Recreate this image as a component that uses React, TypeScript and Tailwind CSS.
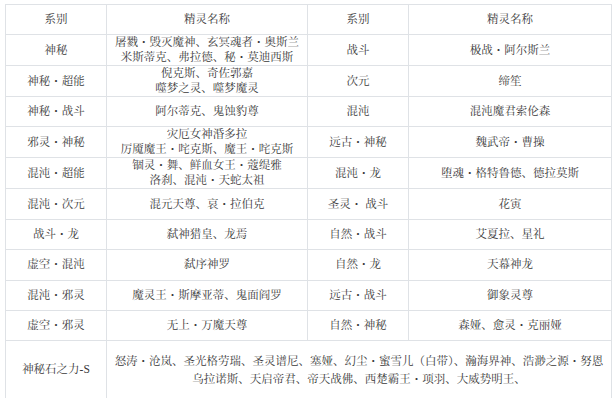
import React from "react";

type Row = { a: string; b: string[]; c: string; d: string[] };

const rows: Row[] = [
  {
    a: "神秘",
    b: ["屠戮・毁灭魔神、玄冥魂者・奥斯兰", "米斯蒂克、弗拉德、秘・莫迪西斯"],
    c: "战斗",
    d: ["极战・阿尔斯兰"],
  },
  {
    a: "神秘・超能",
    b: ["倪克斯、奇佐郭嘉", "噬梦之灵、噬梦魔灵"],
    c: "次元",
    d: ["缔笙"],
  },
  { a: "神秘・战斗", b: ["阿尔蒂克、鬼蚀豹尊"], c: "混沌", d: ["混沌魔君索伦森"] },
  {
    a: "邪灵・神秘",
    b: ["灾厄女神涽多拉", "厉魇魔王・咤克斯、魔王・咤克斯"],
    c: "远古・神秘",
    d: ["魏武帝・曹操"],
  },
  {
    a: "混沌・超能",
    b: ["锢灵・舞、鲜血女王・蔻缇雅", "洛刹、混沌・天蛇太祖"],
    c: "混沌・龙",
    d: ["堕魂・格特鲁德、德拉莫斯"],
  },
  { a: "混沌・次元", b: ["混元天尊、哀・拉伯克"], c: "圣灵・ 战斗", d: ["花寅"] },
  { a: "战斗・龙", b: ["弑神猎皇、龙焉"], c: "自然・战斗", d: ["艾夏拉、星礼"] },
  { a: "虚空・混沌", b: ["弑序神罗"], c: "自然・龙", d: ["天幕神龙"] },
  { a: "混沌・邪灵", b: ["魔灵王・斯摩亚蒂、鬼面阎罗"], c: "远古・战斗", d: ["御象灵尊"] },
  { a: "虚空・邪灵", b: ["无上・万魔天尊"], c: "自然・神秘", d: ["森娅、愈灵・克丽娅"] },
];

const cell = "border border-[#dfe2e6] text-center align-middle p-0";

const App: React.FC = () => {
  return (
    <div className="w-[616px] h-[400px] overflow-hidden bg-white pt-[4px] pl-[5px]">
      <table className="table-fixed border-collapse w-[606px] text-[11.5px] leading-[15px] text-[#3a3a3a] font-['Liberation_Serif','Noto_Serif_CJK_SC','Noto_Sans_CJK_SC',serif]">
        <colgroup>
          <col className="w-[101px]" />
          <col className="w-[201px]" />
          <col className="w-[101px]" />
          <col className="w-[203px]" />
        </colgroup>
        <tbody>
          <tr className="h-[30px]">
            <td className={cell}>系别</td>
            <td className={cell}>精灵名称</td>
            <td className={cell}>系别</td>
            <td className={cell}>精灵名称</td>
          </tr>
          {rows.map((r) => (
            <tr key={r.a} className="h-[30.4px]">
              <td className={cell}>{r.a}</td>
              <td className={cell}>
                {r.b.map((line) => (
                  <div key={line}>{line}</div>
                ))}
              </td>
              <td className={cell}>{r.c}</td>
              <td className={cell}>
                {r.d.map((line) => (
                  <div key={line}>{line}</div>
                ))}
              </td>
            </tr>
          ))}
          <tr className="h-[57px]">
            <td className={cell + " border-b-0"}>神秘石之力-S</td>
            <td colSpan={3} className={cell + " border-b-0 leading-[18px]"}>
              <div>怒涛・沧岚、圣光格劳瑞、圣灵谱尼、塞娅、幻尘・蜜雪儿（白带）、瀚海界神、浩渺之源・努恩</div>
              <div>乌拉诺斯、天启帝君、帝天战佛、西楚霸王・项羽、大威势明王、</div>
            </td>
          </tr>
        </tbody>
      </table>
    </div>
  );
};

export default App;
